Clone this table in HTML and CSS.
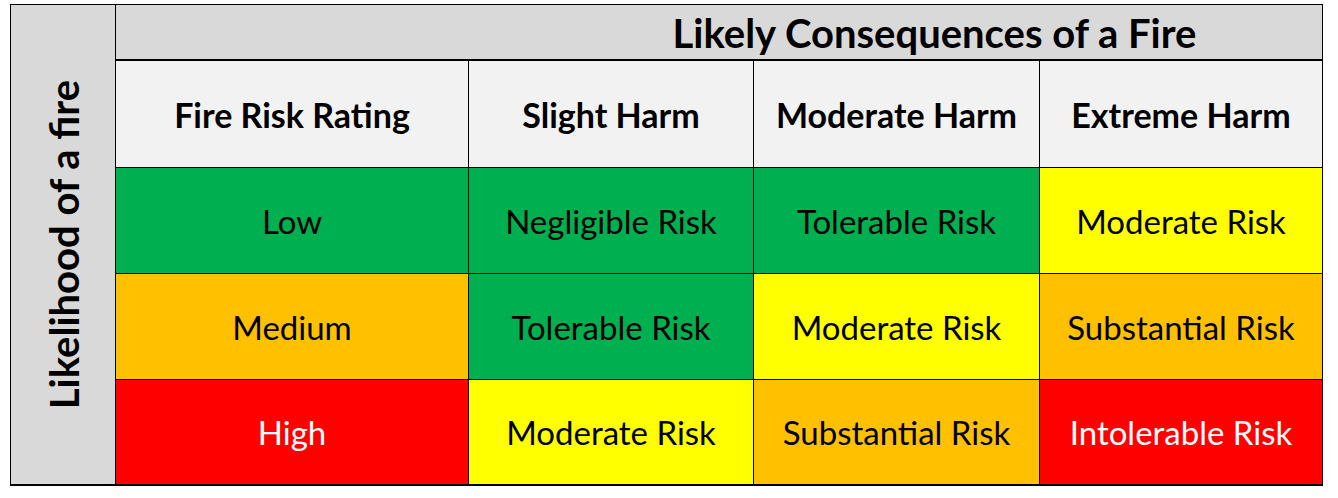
FILE: index.html
```html
<!DOCTYPE html>
<html lang="en">
<head>
<meta charset="utf-8">
<title>Fire Risk Matrix</title>
<link rel="stylesheet" href="styles.css">
</head>
<body>
<div class="matrix">
  <div class="side"><span class="side-text">Likelihood of a fire</span></div>
  <div class="title">Likely Consequences of a Fire</div>

  <div class="cell head">Fire Risk Rating</div>
  <div class="cell head">Slight Harm</div>
  <div class="cell head">Moderate Harm</div>
  <div class="cell head">Extreme Harm</div>

  <div class="cell green">Low</div>
  <div class="cell green">Negligible Risk</div>
  <div class="cell green">Tolerable Risk</div>
  <div class="cell yellow">Moderate Risk</div>

  <div class="cell orange">Medium</div>
  <div class="cell green">Tolerable Risk</div>
  <div class="cell yellow">Moderate Risk</div>
  <div class="cell orange">Substantial Risk</div>

  <div class="cell red">High</div>
  <div class="cell yellow">Moderate Risk</div>
  <div class="cell orange">Substantial Risk</div>
  <div class="cell red">Intolerable Risk</div>
</div>
</body>
</html>
```
FILE: styles.css
```css
html, body {
  margin: 0;
  padding: 0;
  background: #ffffff;
}

body {
  font-family: Lato, "Open Sans", "Liberation Sans", sans-serif;
  color: #000000;
}

.matrix {
  margin: 4px 0 0 10px;
  width: 1310px;
  display: grid;
  grid-template-columns: 104px 352px 284px 285px 282px;
  grid-template-rows: 55px 106px 105px 105px 104px;
  gap: 1px;
  background: #000000;
  border-top: 1px solid #000;
  border-left: 1px solid #000;
  border-right: 2px solid #000;
  border-bottom: 2px solid #000;
}

.side {
  grid-column: 1;
  grid-row: 1 / 6;
  background: #d9d9d9;
  display: flex;
  align-items: center;
  justify-content: center;
}

.side-text {
  writing-mode: vertical-rl;
  transform: rotate(180deg);
  font-weight: 700;
  font-size: 40px;
  white-space: nowrap;
  margin-left: 2px;
}

.title {
  grid-column: 2 / 6;
  grid-row: 1;
  background: #d9d9d9;
  border-bottom: 1px solid #000;
  display: flex;
  align-items: center;
  justify-content: center;
  padding-left: 431px;
  padding-top: 2px;
  font-weight: 700;
  font-size: 40px;
  white-space: nowrap;
}

.cell {
  display: flex;
  align-items: center;
  justify-content: center;
  font-size: 33px;
  white-space: nowrap;
}

.head {
  background: #f2f2f2;
  font-weight: 700;
  font-size: 34px;
}

.green { background: #00b050; }
.yellow { background: #ffff00; }
.orange { background: #ffc000; }
.red { background: #ff0000; color: #ffffff; }
```
